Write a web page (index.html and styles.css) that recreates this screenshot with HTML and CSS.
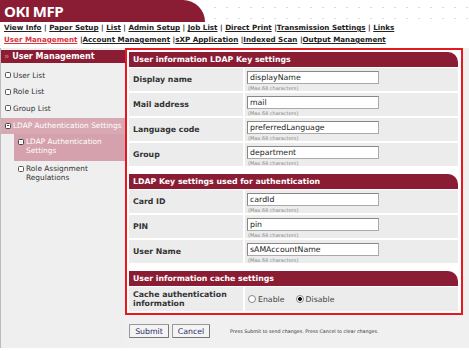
FILE: index.html
```html
<!DOCTYPE html>
<html lang="en">
  <head>
    <meta charset="UTF-8" />
    <title>OKI MFP - LDAP Authentication Settings</title>
    <link rel="stylesheet" href="styles.css">
  </head>
  <body>
    <div class="top">
      <div class="logo">OKI MFP</div>
      <div class="dots"></div>
    </div>

    <div class="nav">
      <a href="#">View Info</a> | <a href="#">Paper Setup</a> | <a href="#">List</a> | <a href="#">Admin Setup</a> | <a href="#">Job List</a> | <a href="#">Direct Print</a> |<a href="#">Transmission Settings</a> | <a href="#">Links</a>
    </div>
    <div class="nav">
      <a href="#" class="current">User Management</a> |<a href="#">Account Management</a> |<a href="#">sXP Application</a> |<a href="#">Indexed Scan</a> |<a href="#">Output Management</a>
    </div>

    <div class="layout">
      <div class="sidebar">
        <div class="side-title"><span class="mark">&raquo;</span>User Management</div>
        <ul class="menu">
          <li><span class="box"></span>User List</li>
          <li><span class="box"></span>Role List</li>
          <li><span class="box"></span>Group List</li>
          <li class="open"><span class="box minus"></span>LDAP Authentication Settings</li>
          <li class="sub active"><span class="box"></span><span>LDAP Authentication<br>Settings</span></li>
          <li class="sub"><span class="box"></span><span>Role Assignment<br>Regulations</span></li>
        </ul>
      </div>

      <div class="main">
        <div class="panel">
          <div class="sec-title">User information LDAP Key settings</div>
          <div class="rows">
            <div class="label">Display name</div>
            <div class="field"><input type="text" value="displayName"><small>(Max.64 characters)</small></div>
            <div class="label">Mail address</div>
            <div class="field"><input type="text" value="mail"><small>(Max.64 characters)</small></div>
            <div class="label">Language code</div>
            <div class="field"><input type="text" value="preferredLanguage"><small>(Max.64 characters)</small></div>
            <div class="label">Group</div>
            <div class="field"><input type="text" value="department"><small>(Max.64 characters)</small></div>
          </div>

          <div class="sec-title">LDAP Key settings used for authentication</div>
          <div class="rows">
            <div class="label">Card ID</div>
            <div class="field"><input type="text" value="cardId"><small>(Max.64 characters)</small></div>
            <div class="label">PIN</div>
            <div class="field"><input type="text" value="pin"><small>(Max.64 characters)</small></div>
            <div class="label">User Name</div>
            <div class="field"><input type="text" value="sAMAccountName"><small>(Max.64 characters)</small></div>
          </div>

          <div class="sec-title">User information cache settings</div>
          <div class="rows last">
            <div class="label">Cache authentication information</div>
            <div class="field radios">
              <label><input type="radio" name="cache">Enable</label>
              <label><input type="radio" name="cache" checked>Disable</label>
            </div>
          </div>
        </div>

        <div class="actions">
          <button>Submit</button>
          <button>Cancel</button>
          <span class="hint">Press Submit to send changes. Press Cancel to clear changes.</span>
        </div>
      </div>
    </div>
  </body>
</html>
```

FILE: styles.css
```css
* {
  margin: 0;
  padding: 0;
  box-sizing: border-box;
}

body {
  font-family: "DejaVu Sans", Verdana, sans-serif;
  background: white;
  color: #333;
  width: 469px;
  height: 351px;
  overflow: hidden;
}

/* header */
.top {
  display: flex;
  height: 22px;
}

.logo {
  width: 205px;
  background: #8a1d33;
  color: white;
  font-family: "Open Sans", "DejaVu Sans", sans-serif;
  font-weight: bold;
  font-size: 15px;
  letter-spacing: -0.5px;
  line-height: 23px;
  padding-left: 4px;
  border-top-right-radius: 22px;
}

.dots {
  flex: 1;
  background-image: radial-gradient(circle, #dadada 0.7px, transparent 1.1px);
  background-size: 12px 11px;
  background-position: 4px 2px;
}

/* nav links */
.nav {
  font-size: 7.15px;
  font-weight: bold;
  color: #333;
  padding-left: 4px;
  line-height: 12px;
  white-space: nowrap;
}

.nav:first-of-type {
  margin-top: 2px;
}

.nav a {
  color: #222;
}

.nav a.current {
  color: #d8353d;
}

/* layout */
.layout {
  display: flex;
  margin-top: 2px;
  height: 300px;
}

.sidebar {
  width: 125px;
  background: #efefef;
  border-left: 1px solid #bbb;
  padding-top: 2px;
}

.side-title {
  background: #8a1d33;
  color: white;
  font-size: 8px;
  font-weight: bold;
  height: 13px;
  line-height: 13px;
  padding-left: 3px;
}

.side-title .mark {
  color: #e8606e;
  margin-right: 3px;
}

.menu {
  list-style: none;
  font-size: 7.4px;
  color: #333;
  padding-top: 4px;
}

.menu li {
  display: flex;
  align-items: center;
  height: 16.5px;
  padding-left: 4px;
}

.menu li.open {
  background: #d9a9b3;
  color: white;
  margin-top: 1px;
  height: 16px;
}

.menu li.sub {
  margin-left: 13px;
  padding-left: 4px;
  align-items: flex-start;
  height: auto;
  padding-top: 3px;
  padding-bottom: 3px;
  line-height: 9.5px;
}

.menu li.sub .box {
  margin-top: 2px;
}

.menu li.active {
  background: #d5a1ac;
  color: white;
  margin-top: 0;
  padding-bottom: 5px;
}

.box {
  width: 6px;
  height: 6px;
  border: 1px solid #555;
  border-radius: 1.5px;
  margin-right: 2px;
  flex-shrink: 0;
  background: white;
}

.open .box,
.active .box {
  border-color: #444;
  background: #f4e6e9;
  box-shadow: inset 0 0 0 1px #fff;
}

.box.minus {
  background: linear-gradient(#444, #444) center / 3px 1px no-repeat, #fff;
}

/* main */
.main {
  flex: 1;
  padding-right: 6px;
  background: #f0f0f0;
}

.panel {
  width: 338px;
  border: 2px solid #e8191e;
  background: white;
  padding: 2px 3px 2px 2px;
}

.sec-title {
  background: #8a1d33;
  color: white;
  font-size: 7.8px;
  font-weight: bold;
  height: 15px;
  line-height: 15px;
  padding-left: 4px;
  border-top-right-radius: 10px;
}

.rows {
  display: grid;
  grid-template-columns: 114px 1fr;
  gap: 2px;
  margin-top: 1px;
  margin-bottom: 8px;
}

.rows.last {
  margin-bottom: 0;
}

.label {
  background: #ececec;
  font-size: 7.8px;
  font-weight: bold;
  color: #333;
  height: 23px;
  display: flex;
  align-items: center;
  padding-left: 4px;
  line-height: 9px;
}

.rows.last .label,
.rows.last .field {
  height: 24px;
}

.field {
  background: #ececec;
  height: 23px;
  padding: 3px 0 0 2px;
}

.field input[type="text"] {
  display: block;
  width: 132px;
  height: 13px;
  border: 1px solid #aaa;
  border-top-color: #888;
  border-left-color: #888;
  font-family: "DejaVu Sans", Verdana, sans-serif;
  font-size: 7.8px;
  color: #222;
  padding-left: 2px;
  background: white;
}

.field small {
  display: block;
  font-size: 5px;
  color: #888;
  line-height: 6px;
  margin-top: 1px;
  padding-left: 1px;
}

.radios {
  display: flex;
  align-items: center;
  padding-top: 0;
  font-size: 7.8px;
  color: #444;
}

.radios label {
  display: flex;
  align-items: center;
  margin-right: 10px;
}

.radios input {
  appearance: none;
  width: 8px;
  height: 8px;
  margin: 0 2px 0 1px;
  border: 1px solid #888;
  border-radius: 50%;
  background: white;
}

.radios input:checked {
  background: radial-gradient(circle, #111 1.6px, white 2.2px);
}

/* buttons */
.actions {
  display: flex;
  align-items: center;
  padding: 9px 0 0 4px;
}

.actions button {
  font-family: "DejaVu Sans", Verdana, sans-serif;
  font-size: 7.8px;
  color: #1f2a6b;
  background: #f4f4f4;
  border: 1px solid #999;
  border-right-color: #777;
  border-bottom-color: #777;
  height: 14px;
  width: 40px;
  margin-right: 3px;
  border-radius: 1px;
}

.actions button + button {
  width: 38px;
}

.hint {
  font-size: 4.8px;
  color: #333;
  margin-left: 17px;
}
```
